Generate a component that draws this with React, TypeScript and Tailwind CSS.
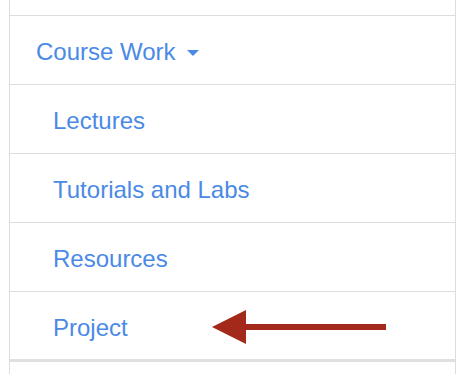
import React from 'react';

const subItems = ['Lectures', 'Tutorials and Labs', 'Resources', 'Project'];

function Caret() {
  return (
    <svg width="12" height="6" viewBox="0 0 12 6" className="ml-[11px] mt-[2px]">
      <polygon points="0,0 12,0 6,6" fill="#4a8ae6" />
    </svg>
  );
}

function Arrow() {
  return (
    <svg
      width="180"
      height="40"
      viewBox="0 0 180 40"
      className="absolute left-[200px] top-[18px]"
    >
      <rect x="34" y="14" width="142" height="6" fill="#a3291a" />
      <polygon points="2,17 36,0 36,34" fill="#a3291a" />
    </svg>
  );
}

export default function App() {
  return (
    <div
      className="w-[474px] h-[374px] bg-white overflow-hidden"
      style={{ fontFamily: '"Liberation Sans", Arial, sans-serif' }}
    >
      <ul className="ml-[9px] w-[447px] border-x border-[#dddddd] text-[24px] text-[#4a8ae6]">
        <li className="h-[16px] border-b border-[#dddddd]" />
        <li className="h-[69px] border-b border-[#dddddd] flex items-center pl-[26px] pt-[4px]">
          <span>Course Work</span>
          <Caret />
        </li>
        {subItems.map((label, i) => (
          <li
            key={label}
            className={
              i === subItems.length - 1
                ? 'relative h-[70px] border-b-[3px] border-[#e0e0e0] flex items-center pl-[43px] pt-[4px]'
                : 'h-[69px] border-b border-[#dddddd] flex items-center pl-[43px] pt-[4px]'
            }
          >
            <span>{label}</span>
            {i === subItems.length - 1 && <Arrow />}
          </li>
        ))}
        <li className="h-[30px]" />
      </ul>
    </div>
  );
}
